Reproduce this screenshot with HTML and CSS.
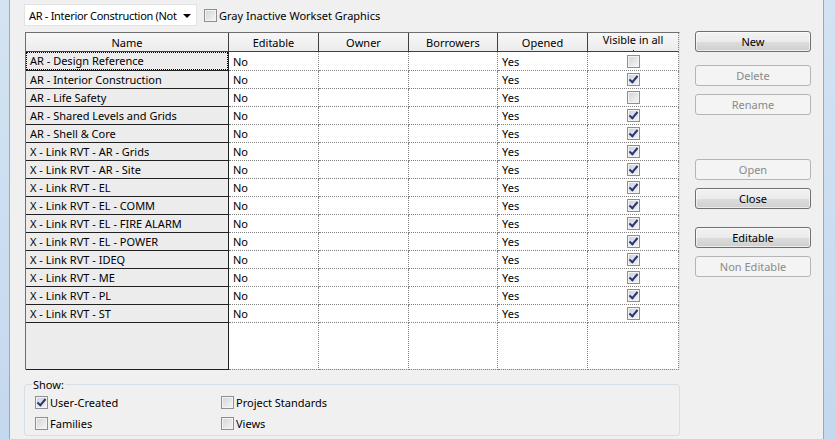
FILE: index.html
```html
<!DOCTYPE html>
<html lang="en">
<head>
  <meta charset="UTF-8">
  <title>Worksets</title>
  <link rel="stylesheet" href="styles.css">
</head>
<body>
  <div class="window">
    <div class="frame frame-left"></div>

    <div class="dialog">
      <div class="main">
        <div class="toolbar">
          <div class="combo">
            <span class="combo-text">AR - Interior Construction (Not</span>
            <span class="combo-arrow"></span>
          </div>
          <label class="check">
            <span class="cb"></span>
            <span>Gray Inactive Workset Graphics</span>
          </label>
        </div>

        <div class="grid-wrap">
          <table class="grid">
            <colgroup>
              <col class="c-name">
              <col class="c-std">
              <col class="c-std">
              <col class="c-borrow">
              <col class="c-std">
              <col class="c-vis">
            </colgroup>
            <thead>
              <tr>
                <th>Name</th>
                <th>Editable</th>
                <th>Owner</th>
                <th>Borrowers</th>
                <th>Opened</th>
                <th class="th-vis"><div class="vis-label">Visible in all</div><span class="vis-dot"></span></th>
              </tr>
            </thead>
            <tbody>
              <tr><td class="name focus"><div class="focus-box">AR - Design Reference</div></td><td>No</td><td></td><td></td><td>Yes</td><td class="vis"><span class="cb"></span></td></tr>
              <tr><td class="name">AR - Interior Construction</td><td>No</td><td></td><td></td><td>Yes</td><td class="vis"><span class="cb on"></span></td></tr>
              <tr><td class="name">AR - Life Safety</td><td>No</td><td></td><td></td><td>Yes</td><td class="vis"><span class="cb"></span></td></tr>
              <tr><td class="name">AR - Shared Levels and Grids</td><td>No</td><td></td><td></td><td>Yes</td><td class="vis"><span class="cb on"></span></td></tr>
              <tr><td class="name">AR - Shell &amp; Core</td><td>No</td><td></td><td></td><td>Yes</td><td class="vis"><span class="cb on"></span></td></tr>
              <tr><td class="name">X - Link RVT - AR - Grids</td><td>No</td><td></td><td></td><td>Yes</td><td class="vis"><span class="cb on"></span></td></tr>
              <tr><td class="name">X - Link RVT - AR - Site</td><td>No</td><td></td><td></td><td>Yes</td><td class="vis"><span class="cb on"></span></td></tr>
              <tr><td class="name">X - Link RVT - EL</td><td>No</td><td></td><td></td><td>Yes</td><td class="vis"><span class="cb on"></span></td></tr>
              <tr><td class="name">X - Link RVT - EL - COMM</td><td>No</td><td></td><td></td><td>Yes</td><td class="vis"><span class="cb on"></span></td></tr>
              <tr><td class="name">X - Link RVT - EL - FIRE ALARM</td><td>No</td><td></td><td></td><td>Yes</td><td class="vis"><span class="cb on"></span></td></tr>
              <tr><td class="name">X - Link RVT - EL - POWER</td><td>No</td><td></td><td></td><td>Yes</td><td class="vis"><span class="cb on"></span></td></tr>
              <tr><td class="name">X - Link RVT - IDEQ</td><td>No</td><td></td><td></td><td>Yes</td><td class="vis"><span class="cb on"></span></td></tr>
              <tr><td class="name">X - Link RVT - ME</td><td>No</td><td></td><td></td><td>Yes</td><td class="vis"><span class="cb on"></span></td></tr>
              <tr><td class="name">X - Link RVT - PL</td><td>No</td><td></td><td></td><td>Yes</td><td class="vis"><span class="cb on"></span></td></tr>
              <tr><td class="name">X - Link RVT - ST</td><td>No</td><td></td><td></td><td>Yes</td><td class="vis"><span class="cb on"></span></td></tr>
              <tr class="filler"><td class="name"></td><td></td><td></td><td></td><td></td><td></td></tr>
            </tbody>
          </table>
        </div>

        <fieldset class="show">
          <legend>Show:</legend>
          <div class="show-grid">
            <label class="check"><span class="cb on"></span><span>User-Created</span></label>
            <label class="check"><span class="cb"></span><span>Project Standards</span></label>
            <label class="check"><span class="cb"></span><span>Families</span></label>
            <label class="check"><span class="cb"></span><span>Views</span></label>
          </div>
        </fieldset>
      </div>

      <div class="side">
        <div class="btn">New</div>
        <div class="btn-group grp-edit">
          <div class="btn off">Delete</div>
          <div class="btn off">Rename</div>
        </div>
        <div class="btn-group grp-open">
          <div class="btn off">Open</div>
          <div class="btn">Close</div>
        </div>
        <div class="btn-group grp-perm">
          <div class="btn">Editable</div>
          <div class="btn off">Non Editable</div>
        </div>
      </div>
    </div>

    <div class="frame frame-right"></div>
  </div>
</body>
</html>
```

FILE: styles.css
```css
body {
  margin: 0;
  font-family: 'Noto Sans', 'Liberation Sans', sans-serif;
  font-size: 11px;
  color: #000;
  background-color: #f0f0f0;
}

.window {
  display: flex;
  height: 439px;
  overflow: hidden;
}

.frame {
  background: linear-gradient(to bottom, #d3e3f3, #c4d8ee);
}

.frame-left {
  width: 9px;
  border-right: 1px solid #98a9bb;
}

.frame-right {
  width: 11px;
  border-left: 1px solid #98a9bb;
}

.dialog {
  flex: 1;
  display: flex;
  gap: 15px;
  padding: 4px 12px 0 14px;
}

.main {
  width: 656px;
}

/* top bar */
.toolbar {
  display: flex;
  align-items: center;
  gap: 7px;
  height: 22px;
  margin-bottom: 6px;
}

.combo {
  width: 173px;
  height: 22px;
  box-sizing: border-box;
  display: flex;
  align-items: center;
  padding: 0 5px 0 4px;
  background-color: #fff;
  border: 1px solid #e2e2e2;
}

.combo-text {
  flex: none;
  white-space: nowrap;
  letter-spacing: -0.3px;
}

.combo-arrow {
  flex: none;
  width: 0;
  height: 0;
  margin-left: auto;
  margin-top: 2px;
  border-left: 4px solid transparent;
  border-right: 4px solid transparent;
  border-top: 4px solid #000;
}

.check {
  display: flex;
  align-items: center;
  gap: 2px;
  white-space: nowrap;
}

.cb {
  display: inline-block;
  position: relative;
  width: 13px;
  height: 13px;
  box-sizing: border-box;
  border: 1px solid #8f8f8f;
  background: linear-gradient(135deg, #d4d4d4, #f6f6f6);
  box-shadow: inset 0 0 0 1px #f4f4f4;
}

.cb.on {
  background: linear-gradient(135deg, #c9cfdc, #f2f4f8);
}

.cb.on::after {
  content: '';
  position: absolute;
  left: 3px;
  top: 0px;
  width: 3px;
  height: 7px;
  border-right: 2px solid #2b3670;
  border-bottom: 2px solid #2b3670;
  transform: rotate(40deg);
}

/* table */
.grid-wrap {
  width: 655px;
  height: 338px;
  margin-left: 1px;
  box-sizing: border-box;
  border: 1px solid #6e6e6e;
  border-right-color: #e4e4e4;
  border-bottom-color: #e4e4e4;
  background-color: #fff;
}

.grid {
  table-layout: fixed;
  border-collapse: separate;
  border-spacing: 0;
  width: 653px;
}

.c-name { width: 203px; }
.c-std { width: 90px; }
.c-borrow { width: 89px; }
.c-vis { width: 91px; }

.grid th {
  height: 19px;
  box-sizing: border-box;
  padding: 0 2px;
  font-weight: normal;
  text-align: center;
  background: linear-gradient(to bottom, #f7f7f7, #ececec);
  border-right: 1px solid #404040;
  border-bottom: 1px solid #404040;
}

.grid th:last-child {
  border-right: 1px dotted #808080;
}

.th-vis {
  vertical-align: top;
  position: relative;
}

.vis-label {
  line-height: 14px;
  white-space: nowrap;
}

.vis-dot {
  position: absolute;
  left: 50%;
  bottom: 0;
  width: 1px;
  height: 1px;
  background-color: #333;
}

.grid tbody tr {
  height: 18px;
}

.grid td {
  box-sizing: border-box;
  padding: 0 4px;
  white-space: nowrap;
  overflow: hidden;
  border-right: 1px dotted #808080;
  border-bottom: 1px dotted #808080;
}

.grid td.name {
  background-color: #ececec;
  border-right: 1px solid #202020;
  border-bottom: 1px solid #202020;
}

.grid td.focus {
  padding: 0;
}

.focus-box {
  height: 16px;
  line-height: 16px;
  padding: 0 3px;
  border: 1px dotted #000;
}

.grid td.vis {
  text-align: center;
  line-height: 0;
}

.grid tr.filler {
  height: 47px;
}

/* show group */
.show {
  margin: 7px 0 0 0;
  padding: 3px 10px 4px 10px;
  width: 656px;
  box-sizing: border-box;
  border: 1px solid #d5dfe5;
  border-radius: 3px;
}

.show legend {
  padding: 0 1px;
  margin-left: -3px;
}

.show-grid {
  display: grid;
  grid-template-columns: 186px auto;
  row-gap: 6px;
}

/* side buttons */
.side {
  width: 116px;
  padding-top: 27px;
  display: flex;
  flex-direction: column;
  gap: 8px;
}

.btn-group {
  display: flex;
  flex-direction: column;
  gap: 8px;
}

.grp-edit { margin-top: 5px; }
.grp-open { margin-top: 36px; }
.grp-perm { margin-top: 10px; }

.btn {
  height: 21px;
  box-sizing: border-box;
  line-height: 19px;
  text-align: center;
  border: 1px solid #707070;
  border-radius: 3px;
  background: linear-gradient(to bottom, #f2f2f2 0%, #ebebeb 50%, #dddddd 51%, #cfcfcf 100%);
  box-shadow: inset 0 0 0 1px rgba(255, 255, 255, 0.6);
}

.btn.off {
  color: #8a8a8a;
  border-color: #b5b5b5;
  background: #f4f4f4;
  box-shadow: none;
}
```
